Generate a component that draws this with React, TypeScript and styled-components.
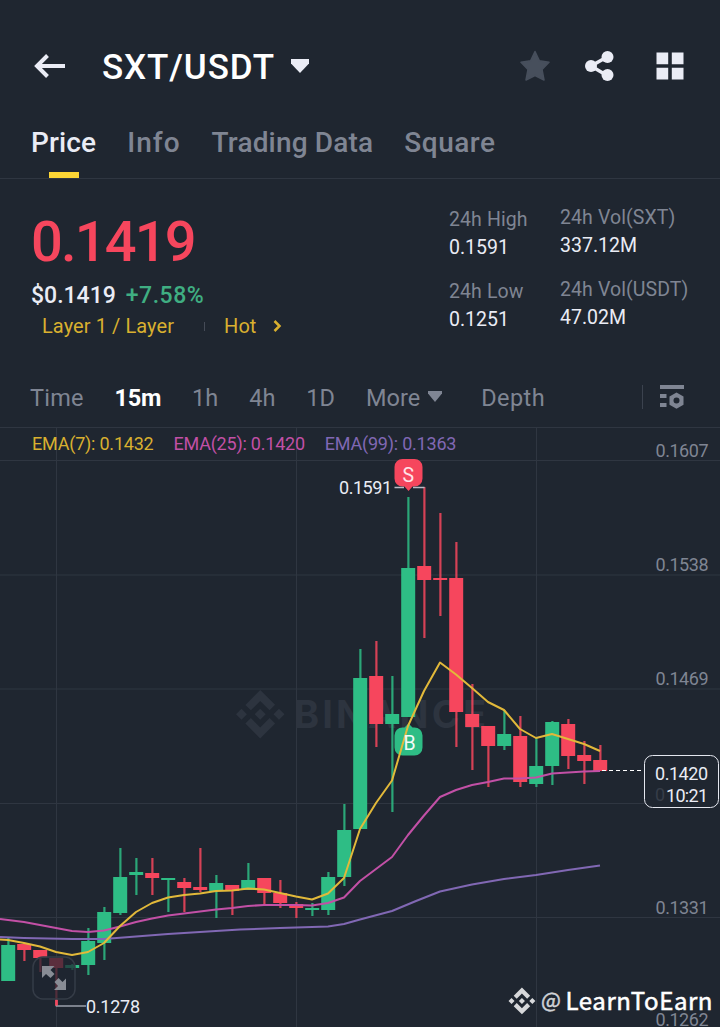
import React from "react";
import styled, { createGlobalStyle } from "styled-components";

const color = {
  bg: "#1f2630",
  line: "#2f3641",
  text: "#eaecf5",
  muted: "#7f8593",
  red: "#f6465d",
  green: "#2ebd85",
  yellow: "#d9b02f",
  pink: "#c250a6",
  purple: "#8168b4",
};

const GlobalStyle = createGlobalStyle`
  * { box-sizing: border-box; }
  body { margin: 0; background: ${color.bg}; }
`;

const Screen = styled.main`
  width: 720px;
  height: 1027px;
  overflow: hidden;
  display: flex;
  flex-direction: column;
  background: ${color.bg};
  color: ${color.text};
  font-family: Roboto, "Liberation Sans", sans-serif;
  white-space: nowrap;
`;

const Header = styled.header`
  display: flex;
  align-items: center;
  height: 107px;
  padding: 25px 36px 0 34px;
`;

const Pair = styled.h1`
  margin: 0 16px 0 37px;
  font-size: 35px;
  line-height: 42px;
  font-weight: 500;
  letter-spacing: 0.9px;
  color: #fff;
  padding-top: 4px;
`;

const Actions = styled.div`
  display: flex;
  align-items: center;
  gap: 34px;
  margin-left: auto;
`;

const Tabs = styled.nav`
  display: flex;
  gap: 31px;
  height: 72px;
  padding-left: 31px;
  border-bottom: 1px solid ${color.line};
`;

const Tab = styled.span<{ $active?: boolean; $spacing?: number }>`
  display: flex;
  flex-direction: column;
  align-items: center;
  justify-content: space-between;
  padding-top: 19px;
  font-size: 28px;
  line-height: 33px;
  font-weight: 500;
  letter-spacing: ${(p) => p.$spacing ?? 0}px;
  color: ${(p) => (p.$active ? color.text : color.muted)};
  &::after {
    content: "";
    width: 30px;
    height: 6px;
    background: ${(p) => (p.$active ? "#fcd535" : "transparent")};
  }
`;

const Summary = styled.section`
  display: flex;
  height: 188px;
  padding-left: 31px;
`;

const PriceBlock = styled.div`
  width: 418px;
  padding-top: 34px;
`;

const LastPrice = styled.div`
  font-size: 56px;
  line-height: 58px;
  font-weight: 500;
  letter-spacing: -1.8px;
  color: ${color.red};
`;

const Converted = styled.div`
  display: flex;
  gap: 10px;
  margin-top: 11px;
  font-size: 23px;
  line-height: 28px;
  font-weight: 500;
`;

const Change = styled.span`
  letter-spacing: 0.5px;
  color: #3fae82;
`;

const Tags = styled.div`
  display: flex;
  align-items: center;
  margin-top: 3px;
  padding-left: 11px;
  font-size: 20px;
  line-height: 26px;
  letter-spacing: 0.08px;
  color: ${color.yellow};
`;

const TagDivider = styled.i`
  width: 1px;
  height: 9px;
  margin: 0 19px 0 30px;
  background: #454b57;
`;

const Chevron = styled.svg`
  margin-left: 16px;
`;

const StatColumn = styled.dl<{ $width: number; $top: number }>`
  width: ${(p) => p.$width}px;
  margin: 0;
  padding-top: ${(p) => p.$top}px;
`;

const StatLabel = styled.dt`
  font-size: 19.5px;
  line-height: 28px;
  letter-spacing: 0.1px;
  color: ${color.muted};
`;

const StatValue = styled.dd`
  margin: 0 0 16px;
  font-size: 19.5px;
  line-height: 28px;
  color: ${color.text};
`;

const Intervals = styled.nav`
  display: flex;
  align-items: center;
  gap: 31px;
  height: 60px;
  padding: 1px 36px 0 30px;
  font-size: 23.5px;
  color: ${color.muted};
`;

const Interval = styled.span<{ $active?: boolean; $spacing?: number; $indent?: number }>`
  display: flex;
  align-items: center;
  gap: 8px;
  margin-left: ${(p) => p.$indent ?? 0}px;
  letter-spacing: ${(p) => p.$spacing ?? 0}px;
  font-weight: ${(p) => (p.$active ? 700 : 400)};
  color: ${(p) => (p.$active ? "#fff" : color.muted)};
`;

const MoreCaret = styled.svg`
  margin-bottom: 3px;
`;

const Settings = styled.div`
  display: flex;
  align-items: center;
  gap: 17px;
  margin-left: auto;
  padding-bottom: 2px;
  &::before {
    content: "";
    width: 1px;
    height: 24px;
    background: #3b424e;
  }
`;

const ChartArea = styled.section`
  position: relative;
  height: 600px;
  border-top: 1px solid ${color.line};
  svg { display: block; }
`;

const Legend = styled.div`
  position: absolute;
  top: 5px;
  left: 32px;
  display: flex;
  gap: 20px;
  font-size: 18px;
  line-height: 22px;
  letter-spacing: -0.22px;
`;

const LegendItem = styled.span<{ $tone: string }>`
  color: ${(p) => p.$tone};
`;

const LOGO =
  "M16.624 13.9202l2.7175 2.7154-7.353 7.353-7.353-7.352 2.7175-2.7164 4.6355 4.6595 4.6356-4.6595zm4.6366-4.6366L24 12l-2.7154 2.7164L18.5682 12l2.6924-2.7164zm-9.272.001l2.7163 2.6914-2.7164 2.7174v-.001L9.2721 12l2.7164-2.7154zm-9.2722-.001L5.4088 12l-2.6914 2.6924L0 12l2.7164-2.7164zM11.9885.0115l7.353 7.329-2.7174 2.7154-4.6356-4.6356-4.6355 4.6595-2.7174-2.7154 7.353-7.353z";

type Candle = [up: 0 | 1, high: number, top: number, bottom: number, low: number];

// Candles are spaced 16px apart, the first centred at x = 8.
const candles: Candle[] = [
  [1, 938, 945, 981, 981],
  [0, 944, 944, 950, 961],
  [0, 950, 950, 958, 972],
  [0, 958, 958, 968, 1006],
  [1, 964, 965, 968, 970],
  [1, 928, 941, 965, 975],
  [1, 907, 912, 943, 960],
  [1, 848, 877, 913, 915],
  [1, 858, 872, 875, 895],
  [0, 858, 873, 878, 895],
  [1, 878, 878, 880, 912],
  [0, 878, 882, 888, 912],
  [0, 848, 887, 890, 892],
  [1, 875, 883, 891, 918],
  [0, 885, 885, 891, 915],
  [1, 863, 880, 890, 890],
  [0, 878, 878, 893, 904],
  [0, 880, 893, 903, 908],
  [0, 902, 904, 908, 918],
  [1, 903, 908, 910, 916],
  [1, 872, 877, 910, 915],
  [1, 804, 830, 877, 886],
  [1, 649, 678, 829, 829],
  [0, 641, 676, 724, 747],
  [1, 676, 714, 724, 812],
  [1, 497, 568, 717, 717],
  [0, 487, 566, 580, 638],
  [0, 513, 578, 580, 616],
  [0, 542, 578, 712, 747],
  [0, 684, 714, 727, 770],
  [0, 726, 726, 746, 787],
  [1, 710, 734, 746, 750],
  [0, 716, 736, 782, 787],
  [1, 738, 766, 784, 787],
  [1, 721, 722, 766, 785],
  [0, 719, 724, 756, 769],
  [0, 741, 755, 761, 784],
  [0, 745, 760, 771, 771],
];

const EMA7 =
  "0,939.5 8,940 24,943 40,946.5 56,952 72,955 88,952 104,943 120,926 136,912 152,903 168,897.5 184,895 200,893.5 216,891 232,890.5 248,888.5 264,889.5 280,893 296,896.5 312,899.5 328,893.5 344,878 360,829 376,803 392,780.5 408,726 424,691 440,662.5 456,674.5 472,688 488,702 504,710 520,729 536,738 552,734 568,739 584,744 600,751";
const EMA25 =
  "0,919 24,922 40,925 56,928 72,931 88,932 104,930.5 120,926.5 136,922 152,918.5 168,915.5 200,911.5 216,909.5 232,908 248,906 264,905 280,905 296,905 312,905.5 328,903 344,897.5 360,881 392,857 408,835 424,815.5 440,797 456,790 472,785 488,782 504,778.5 520,778.5 536,777.5 552,773.5 568,772.5 584,771.5 600,771";
const EMA99 =
  "0,937 24,938 72,939 104,939 136,936.5 168,934 200,932 240,929.5 280,928 328,926.5 344,924 360,919.5 392,911 416,901 440,891.5 472,884.5 504,879 536,875 568,870 600,865.5";

const axisLabels = [
  { y: 457, value: "0.1607" },
  { y: 571, value: "0.1538" },
  { y: 685, value: "0.1469" },
  { y: 914, value: "0.1331" },
  { y: 1026, value: "0.1262" },
];

function Chart() {
  return (
    <svg width="720" height="599" viewBox="0 428 720 599" fontFamily="Roboto, sans-serif" fontSize="18">
      <g stroke={color.line} strokeWidth="1">
        {[460.5, 575, 689, 803.5, 917.5].map((y) => (
          <path key={y} d={`M0 ${y}H720`} />
        ))}
        {[56.5, 296.5, 536.5].map((x) => (
          <path key={x} d={`M${x} 428V1027`} />
        ))}
      </g>
      <g fill="#2d343f">
        <path d={LOGO} transform="translate(236 690) scale(2.02)" />
        <text x="294" y="728" fontFamily="Inter" fontWeight="700" fontSize="38" textLength="192">
          BINANCE
        </text>
      </g>
      {candles.map(([up, high, top, bottom, low], i) => {
        const x = 8 + i * 16;
        return (
          <g key={x} fill={up ? color.green : color.red}>
            <rect x={x - 0.7} y={high} width="2.2" height={low - high} opacity="0.85" />
            <rect x={x - 6.8} y={top} width="14" height={bottom - top} />
          </g>
        );
      })}

      {/* sell and buy markers */}
      <path d="M402.500 459h12a8 8 0 0 1 8 8v11.500a8 8 0 0 1-8 8h-2l-4 4.500-4-4.500h-2a8 8 0 0 1-8-8V467a8 8 0 0 1 8-8z" fill={color.red} />
      <path d="M394.500 487.500H404M413 487.500H424.500" stroke="#b9bcc6" strokeWidth="1.500" />
      <path d="M402.500 727.500h2l4-4 4 4h2a8 8 0 0 1 8 8v12a8 8 0 0 1-8 8h-12a8 8 0 0 1-8-8v-12a8 8 0 0 1 8-8z" fill={color.green} />

      <g fill="none" strokeWidth="2" strokeLinejoin="round">
        <polyline points={EMA99} stroke={color.purple} />
        <polyline points={EMA25} stroke={color.pink} />
        <polyline points={EMA7} stroke="#e2b93a" />
      </g>

      <text x="408.300" y="482" textAnchor="middle" fontSize="19.500" fill="#ffe3e8">S</text>
      <text x="409.500" y="750" textAnchor="middle" fontSize="19.500" fill="#f2fbf7">B</text>

      <text x="339" y="494" fill={color.text} textLength="53">0.1591</text>
      <path d="M56.500 1000v6H86" fill="none" stroke="#9ba0ab" strokeWidth="1.500" />
      <path d="M56.500 1000v5.500" stroke={color.red} strokeWidth="2.500" />
      <text x="86" y="1013" fill={color.text} textLength="54">0.1278</text>

      {/* expand button */}
      <rect x="33" y="957" width="42" height="42" rx="10" fill={color.bg} fillOpacity="0.72" stroke="#353c47" strokeWidth="1.500" />
      <g fill="#888c95">
        <path d="M42 966h12.500l-4 4 4 4-4 4-4.500-4-4 4z" />
        <path d="M66 990H54l4-4-3.500-4 4-4 4 4 3.500-3.500z" />
      </g>

      <g fill={color.muted}>
        {axisLabels.map((label) => (
          <text key={label.value} x="655.500" y={label.y} textLength="53">
            {label.value}
          </text>
        ))}
      </g>

      {/* current price */}
      <path d="M602 770.500H644" stroke="#fff" strokeWidth="1.200" strokeDasharray="4 3" />
      <rect x="644.500" y="755.500" width="74" height="52" rx="8" fill={color.bg} stroke="#e4e7ef" />
      <text x="655" y="801" fill="#363d48">0</text>
      <g fill={color.text}>
        <text x="655" y="780" textLength="53">0.1420</text>
        <text x="666" y="802" textLength="42">10:21</text>
      </g>

      {/* author signature */}
      <path d={LOGO} fill="#d7d8da" transform="translate(508.500 987.500) scale(1.120)" />
      <g fontFamily="'Noto Sans CJK SC', sans-serif" fontWeight="400" fontSize="24" strokeWidth="0.500">
        <text x="541" y="1008" fontSize="21" fill="#cfd1d5" stroke="#cfd1d5">@</text>
        <text x="565.500" y="1010" fill="#fff" stroke="#fff" textLength="147">LearnToEarn</text>
      </g>
    </svg>
  );
}

export default function App() {
  return (
    <Screen>
      <GlobalStyle />
      <Header>
        <svg width="31" height="24" viewBox="0 0 31 24" fill="none" stroke={color.text} strokeWidth="4">
          <path d="M31 12H4M13.500 1.500L3 12l10.500 10.500" />
        </svg>
        <Pair>SXT/USDT</Pair>
        <svg width="18" height="14" viewBox="0 0 18 14" fill={color.text}>
          <path d="M0 0h18v4.500L9 14 0 4.500z" />
        </svg>
        <Actions>
          <svg width="30" height="32" viewBox="0 0 30 32" fill="#474f5c" stroke="#474f5c" strokeWidth="1.500" strokeLinejoin="round">
            <path d="M15 1.500l4.400 9.300 9.600 1.500-7 7.200 2 10.500-9-4.500L6 30l2-10.500-7-7.200 9.600-1.500z" />
          </svg>
          <svg width="30" height="32" viewBox="0 0 30 32" fill={color.text}>
            <path d="M7 16L23 7M7 16l16 9.500" stroke={color.text} strokeWidth="3.500" />
            <circle cx="7" cy="16" r="6" />
            <circle cx="23.500" cy="7" r="6" />
            <circle cx="23.500" cy="25" r="6" />
          </svg>
          <svg width="36" height="28" viewBox="0 0 36 28" fill={color.text}>
            <path d="M8.500 .5h11.700v11.700H8.500zM23.800 .5h11.700v11.700H23.800zM8.500 15.800h11.700v11.700H8.500zM23.800 15.800h11.700v11.700H23.800z" />
          </svg>
        </Actions>
      </Header>
      <Tabs>
        <Tab $active $spacing={0.15}>Price</Tab>
        <Tab $spacing={1}>Info</Tab>
        <Tab $spacing={0.17}>Trading Data</Tab>
        <Tab $spacing={0.5}>Square</Tab>
      </Tabs>
      <Summary>
        <PriceBlock>
          <LastPrice>0.1419</LastPrice>
          <Converted>
            <span>$0.1419</span>
            <Change>+7.58%</Change>
          </Converted>
          <Tags>
            <span>Layer 1 / Layer</span>
            <TagDivider />
            <span>Hot</span>
            <Chevron width="9" height="12" viewBox="0 0 9 12" fill="none" stroke={color.yellow} strokeWidth="2.500">
              <path d="M1.500 1l5 5-5 5" />
            </Chevron>
          </Tags>
        </PriceBlock>
        <StatColumn $width={111} $top={27}>
          <StatLabel>24h High</StatLabel>
          <StatValue>0.1591</StatValue>
          <StatLabel>24h Low</StatLabel>
          <StatValue>0.1251</StatValue>
        </StatColumn>
        <StatColumn $width={140} $top={25}>
          <StatLabel>24h Vol(SXT)</StatLabel>
          <StatValue>337.12M</StatValue>
          <StatLabel>24h Vol(USDT)</StatLabel>
          <StatValue>47.02M</StatValue>
        </StatColumn>
      </Summary>
      <Intervals>
        <Interval $spacing={0.2}>Time</Interval>
        <Interval $active $spacing={-0.3}>15m</Interval>
        <Interval>1h</Interval>
        <Interval>4h</Interval>
        <Interval>1D</Interval>
        <Interval>
          More
          <MoreCaret width="14" height="11" viewBox="0 0 14 11" fill={color.muted}>
            <path d="M0 0h14v2.500L7 11 0 2.500z" />
          </MoreCaret>
        </Interval>
        <Interval $indent={8} $spacing={0.45}>Depth</Interval>
        <Settings>
          <svg width="24" height="24" viewBox="0 0 24 24" fill={color.muted}>
            <path d="M0 0h24v4H0zM0 9h6.500v4H0zM0 18h6.500v4H0z" />
            <path fillRule="evenodd" d="M16.500 7.500l7 4v8.200l-7 4-7-4v-8.200zM16.500 12.500a3 3 0 1 0 0 6 3 3 0 0 0 0-6z" />
          </svg>
        </Settings>
      </Intervals>
      <ChartArea>
        <Chart />
        <Legend>
          <LegendItem $tone={color.yellow}>EMA(7): 0.1432</LegendItem>
          <LegendItem $tone={color.pink}>EMA(25): 0.1420</LegendItem>
          <LegendItem $tone={color.purple}>EMA(99): 0.1363</LegendItem>
        </Legend>
      </ChartArea>
    </Screen>
  );
}
